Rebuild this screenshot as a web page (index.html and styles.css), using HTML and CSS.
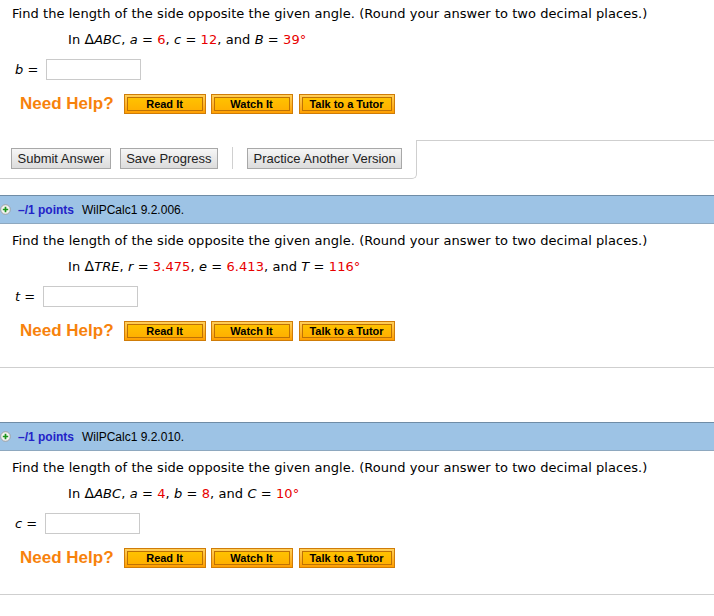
FILE: index.html
```html
<!DOCTYPE html>
<html>
<head>
<meta charset="utf-8">
<link rel="stylesheet" href="styles.css">
</head>
<body>
<section class="qbody">
  <p class="prompt">Find the length of the side opposite the given angle. (Round your answer to two decimal places.)</p>
  <p class="given">In <span class="tri">Δ</span><i>ABC</i>, <i>a</i> = <span class="num">6</span>, <i>c</i> = <span class="num">12</span>, and <i>B</i> = <span class="num">39°</span></p>
  <div class="answer"><span class="lbl"><i>b</i> =</span><input class="field" type="text"></div>
  <div class="help">
    <span class="need">Need Help?</span>
    <span class="hbtn read"><span>Read It</span></span>
    <span class="hbtn watch"><span>Watch It</span></span>
    <span class="hbtn tutor"><span>Talk to a Tutor</span></span>
  </div>
</section>

<div class="actions-row">
  <div class="actions">
    <button class="gbtn">Submit Answer</button>
    <button class="gbtn save">Save Progress</button>
    <span class="vsep"></span>
    <button class="gbtn">Practice Another Version</button>
  </div>
  <div class="tabfill"></div>
</div>

<div class="qhead">
  <svg class="plus" width="11" height="11" viewBox="0 0 11 11"><circle cx="5.5" cy="5.5" r="4.8" fill="#f3f3f3" stroke="#9c9c9c" stroke-width="0.9"/><path d="M5.5 2.8v5.4M2.8 5.5h5.4" stroke="#1a941a" stroke-width="1.7"/></svg>
  <span class="pts">–/1 points</span>
  <span class="ref">WilPCalc1 9.2.006.</span>
</div>
<section class="qbody">
  <p class="prompt">Find the length of the side opposite the given angle. (Round your answer to two decimal places.)</p>
  <p class="given">In <span class="tri">Δ</span><i>TRE</i>, <i>r</i> = <span class="num">3.475</span>, <i>e</i> = <span class="num">6.413</span>, and <i>T</i> = <span class="num">116°</span></p>
  <div class="answer"><span class="lbl"><i>t</i> =</span><input class="field" type="text"></div>
  <div class="help">
    <span class="need">Need Help?</span>
    <span class="hbtn read"><span>Read It</span></span>
    <span class="hbtn watch"><span>Watch It</span></span>
    <span class="hbtn tutor"><span>Talk to a Tutor</span></span>
  </div>
</section>
<hr class="sep">

<div class="qhead">
  <svg class="plus" width="11" height="11" viewBox="0 0 11 11"><circle cx="5.5" cy="5.5" r="4.8" fill="#f3f3f3" stroke="#9c9c9c" stroke-width="0.9"/><path d="M5.5 2.8v5.4M2.8 5.5h5.4" stroke="#1a941a" stroke-width="1.7"/></svg>
  <span class="pts">–/1 points</span>
  <span class="ref">WilPCalc1 9.2.010.</span>
</div>
<section class="qbody">
  <p class="prompt">Find the length of the side opposite the given angle. (Round your answer to two decimal places.)</p>
  <p class="given">In <span class="tri">Δ</span><i>ABC</i>, <i>a</i> = <span class="num">4</span>, <i>b</i> = <span class="num">8</span>, and <i>C</i> = <span class="num">10°</span></p>
  <div class="answer"><span class="lbl"><i>c</i> =</span><input class="field" type="text"></div>
  <div class="help">
    <span class="need">Need Help?</span>
    <span class="hbtn read"><span>Read It</span></span>
    <span class="hbtn watch"><span>Watch It</span></span>
    <span class="hbtn tutor"><span>Talk to a Tutor</span></span>
  </div>
</section>
<hr class="sep">
</body>
</html>
```

FILE: styles.css
```css
body {
  margin: 0;
  padding-top: 6px;
  font-family: "DejaVu Sans", Verdana, sans-serif;
  font-size: 13px;
  color: #000;
  background: #fff;
}

.qbody {
  padding-left: 12px;
}

.qhead + .qbody {
  margin-top: 9px;
}

.prompt {
  margin: 0;
  line-height: 16px;
  letter-spacing: 0.05px;
}

.given {
  margin: 10px 0 0 56px;
  line-height: 16px;
  letter-spacing: 0.08px;
}

.tri {
  font-size: 14px;
  line-height: 0;
}

.num {
  color: #e80000;
}

.answer {
  display: flex;
  align-items: center;
  gap: 8px;
  margin: 11px 0 0 3px;
}

.lbl {
  line-height: 16px;
  white-space: nowrap;
}

.field {
  width: 95px;
  height: 21px;
  box-sizing: border-box;
  border: 1px solid #cacaca;
  margin: 0;
  padding: 0;
  background: #fff;
}

.help {
  display: flex;
  align-items: center;
  height: 20px;
  margin: 14px 0 0 8px;
}

.need {
  font: bold 17px "Liberation Sans", Arial, sans-serif;
  color: #f7820c;
  margin-right: 10px;
  white-space: nowrap;
}

.hbtn {
  display: flex;
  flex: none;
  height: 20px;
  box-sizing: border-box;
  border: 1px solid #cf7c08;
  padding: 2px;
  background: linear-gradient(#ffcf5a, #ff9f00);
}

.hbtn span {
  flex: 1;
  display: flex;
  align-items: center;
  justify-content: center;
  border: 1px solid #bf7204;
  background: linear-gradient(#ffc200, #ffb000);
  font: bold 11px "Liberation Sans", Arial, sans-serif;
  color: #000;
  white-space: nowrap;
}

.read,
.watch {
  width: 82px;
}

.watch {
  margin-left: 5px;
}

.tutor {
  width: 96px;
  margin-left: 6px;
}

.actions-row {
  display: flex;
  margin-top: 26px;
}

.actions {
  flex: none;
  width: 417px;
  box-sizing: border-box;
  display: flex;
  align-items: center;
  padding: 7px 12px 9px 11px;
  border-right: 1px solid #cfcfcf;
  border-bottom: 1px solid #cfcfcf;
  border-bottom-right-radius: 5px;
}

.tabfill {
  flex: 1;
  border-top: 1px solid #cfcfcf;
}

.gbtn {
  flex: none;
  white-space: nowrap;
  height: 21px;
  box-sizing: border-box;
  margin: 0;
  padding: 0 5.5px;
  border: 1px solid #a8a8a8;
  border-radius: 0;
  background: linear-gradient(#f6f6f6, #dcdcdc);
  font: 13px "Liberation Sans", Arial, sans-serif;
  color: #222;
  line-height: 19px;
}

.save {
  margin-left: 9px;
}

.vsep {
  flex: none;
  width: 1px;
  height: 22px;
  background: #d0d0d0;
  margin: 0 14px;
}

.qhead {
  display: flex;
  align-items: center;
  height: 29px;
  box-sizing: border-box;
  margin-top: 16px;
  padding-left: 0;
  background: #9dc3e5;
  border-top: 1px solid #6f8ca6;
  border-bottom: 1px solid #8ea8bf;
  font: 12px "Liberation Sans", Arial, sans-serif;
}

.sep + .qhead {
  margin-top: 54px;
}

.plus {
  flex: none;
}

.pts {
  font-weight: bold;
  color: #2222c8;
  margin: 0 8px 0 7px;
}

.sep {
  margin: 26px 0 0;
  height: 0;
  border: 0;
  border-top: 1px solid #cfcfcf;
}
```
